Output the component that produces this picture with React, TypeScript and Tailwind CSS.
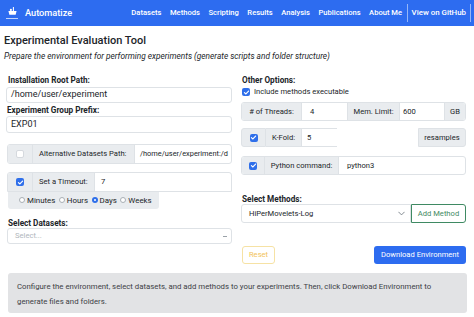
import React from "react";

function Check({ checked }: { checked: boolean }) {
  if (checked) {
    return (
      <span className="w-[8px] h-[8px] rounded-[2px] bg-[#2f6fea] flex items-center justify-center shrink-0">
        <svg viewBox="0 0 8 8" className="w-[7px] h-[7px]">
          <path d="M1.6 4.1 L3.3 5.7 L6.4 2.3" stroke="white" strokeWidth="1.3" fill="none" strokeLinecap="round" strokeLinejoin="round" />
        </svg>
      </span>
    );
  }
  return <span className="w-[8px] h-[8px] rounded-[2px] bg-white border border-[#d5d9de] shrink-0" />;
}

function Radio({ checked, label }: { checked: boolean; label: string }) {
  return (
    <span className="flex items-center gap-[2px]">
      {checked ? (
        <span className="w-[6px] h-[6px] rounded-full bg-[#2f6fea] flex items-center justify-center">
          <span className="w-[2px] h-[2px] rounded-full bg-white" />
        </span>
      ) : (
        <span className="w-[6px] h-[6px] rounded-full bg-white border border-[#a9afb5]" />
      )}
      <span>{label}</span>
    </span>
  );
}

function Chevron() {
  return (
    <svg viewBox="0 0 10 6" className="w-[7px] h-[5px]">
      <path d="M1 1 L5 5 L9 1" stroke="#6c757d" strokeWidth="1.2" fill="none" strokeLinecap="round" />
    </svg>
  );
}

export default function App() {
  const navLinks = ["Datasets", "Methods", "Scripting", "Results", "Analysis", "Publications", "About Me"];
  return (
    <div className="w-[474px] h-[317px] overflow-hidden bg-white text-[#212529] font-['Roboto','Liberation_Sans',Arial,sans-serif]">
      <nav className="h-[26px] bg-[#2d6cf0] flex items-center text-white">
        <div className="flex items-center pl-[6px]">
          <span className="flex flex-col items-center">
            <svg viewBox="0 0 12 10" className="w-[11px] h-[9px]">
              <path d="M7 0.5 L7 4.5" stroke="white" strokeWidth="1.2" strokeLinecap="round" />
              <path d="M1.5 4.5 L10.5 4.5 L9.5 8.5 L2.5 8.5 Z" fill="white" />
              <circle cx="4.2" cy="3.2" r="1.2" fill="white" />
            </svg>
            <span className="mt-[2px] w-[12px] h-[1px] bg-white/70" />
          </span>
          <span className="ml-[7px] text-[9.2px] font-medium leading-none">Automatize</span>
        </div>
        <div className="ml-auto flex items-center h-full text-[7.6px] font-medium pr-[3px]">
          {navLinks.map((l) => (
            <span key={l} className="mr-[8.5px]">{l}</span>
          ))}
          <span className="w-px h-[18px] bg-white/50 mr-[4px] -ml-[4px]" />
          <span className="text-[7.9px]">View on GitHub</span>
          <span className="w-px h-[18px] bg-white/50 ml-[4px]" />
        </div>
      </nav>

      <div className="pl-[6px] pr-[7px]">
        <h1 className="mt-[7px] text-[11px] font-medium leading-[16px] -ml-[2px]">Experimental Evaluation Tool</h1>
        <p className="mt-[2px] text-[8.3px] italic leading-[10px] -ml-[2px]">
          Prepare the environment for performing experiments (generate scripts and folder structure)
        </p>

        <div className="mt-[14px] grid grid-cols-[226px_225px] gap-x-[9px] items-start">
          {/* Left column */}
          <div className="flex flex-col">
            <div className="text-[8.2px] font-bold leading-[10px] pl-[2px]">Installation Root Path:</div>
            <div className="mt-[2px] h-[16px] border border-[#dee2e6] rounded-[3px] flex items-center pl-[4px] text-[9px]">
              /home/user/experiment
            </div>
            <div className="mt-[2px] text-[8.2px] font-bold leading-[10px] pl-[1px]">Experiment Group Prefix:</div>
            <div className="mt-[1px] h-[17px] border border-[#dee2e6] rounded-[3px] flex items-center pl-[4px] text-[9px]">
              EXP01
            </div>

            <div className="mt-[11px] ml-[1px] h-[20px] flex border border-[#dee2e6] rounded-[3px] overflow-hidden text-[7.6px]">
              <div className="w-[25px] bg-[#e9ecef] border-r border-[#dee2e6] flex items-center justify-center">
                <Check checked={false} />
              </div>
              <div className="w-[102px] bg-[#e9ecef] border-r border-[#dee2e6] flex items-center pl-[6px] whitespace-nowrap">
                Alternative Datasets Path:
              </div>
              <div className="flex-1 flex items-center pl-[5px] whitespace-nowrap overflow-hidden text-[7.4px]">/home/user/experiment:/d</div>
            </div>

            <div className="mt-[8px] ml-[1px] h-[20px] flex border border-[#dee2e6] rounded-t-[3px] overflow-hidden text-[7.6px]">
              <div className="w-[25px] bg-[#e9ecef] border-r border-[#dee2e6] flex items-center justify-center">
                <Check checked={true} />
              </div>
              <div className="w-[62px] bg-[#e9ecef] border-r border-[#dee2e6] flex items-center pl-[6px] whitespace-nowrap">
                Set a Timeout:
              </div>
              <div className="flex-1 flex items-center pl-[6px]">7</div>
            </div>
            <div className="ml-[2px] w-[151px] h-[17px] bg-[#e9ecef] rounded-b-[3px] flex items-center pl-[11px] gap-[3.5px] text-[7.9px]">
              <Radio checked={false} label="Minutes" />
              <Radio checked={false} label="Hours" />
              <Radio checked={true} label="Days" />
              <Radio checked={false} label="Weeks" />
            </div>

            <div className="mt-[9px] text-[8.2px] font-bold leading-[10px] pl-[2px]">Select Datasets:</div>
            <div className="mt-[0px] ml-[1px] h-[16px] border border-[#dee2e6] rounded-[3px] flex items-center pl-[7px] pr-[4px] text-[7.6px] text-[#b0b6bc]">
              <span>Select...</span>
              <span className="ml-auto w-[4px] h-[1px] bg-[#9aa1a8]" />
            </div>
          </div>

          {/* Right column */}
          <div className="flex flex-col">
            <div className="text-[8.2px] font-bold leading-[10px] pl-[1px]">Other Options:</div>
            <div className="mt-[2px] h-[10px] flex items-center gap-[4px] text-[7.6px] pl-[1px]">
              <Check checked={true} />
              <span>Include methods executable</span>
            </div>

            <div className="mt-[5px] h-[19px] flex border border-[#dee2e6] rounded-[3px] overflow-hidden text-[7.6px]">
              <div className="w-[60px] bg-[#e9ecef] border-r border-[#dee2e6] flex items-center justify-center whitespace-nowrap">
                # of Threads:
              </div>
              <div className="w-[45px] flex items-center pl-[8px]">4</div>
              <div className="w-[53px] bg-[#e9ecef] border-x border-[#dee2e6] flex items-center justify-center whitespace-nowrap">
                Mem. Limit:
              </div>
              <div className="w-[44px] flex items-center pl-[3px]">600</div>
              <div className="flex-1 bg-[#e9ecef] border-l border-[#dee2e6] flex items-center justify-center">GB</div>
            </div>

            <div className="mt-[7px] h-[19px] flex text-[7.6px]">
              <div className="w-[25px] bg-[#e9ecef] border border-[#dee2e6] rounded-l-[3px] flex items-center justify-center">
                <Check checked={true} />
              </div>
              <div className="w-[36px] bg-[#e9ecef] border-y border-r border-[#dee2e6] flex items-center justify-center">
                K-Fold:
              </div>
              <div className="w-[35px] border-y border-[#dee2e6] flex items-center pl-[5px]">5</div>
              <div className="flex-1" />
              <div className="w-[48px] bg-[#e9ecef] border border-[#dee2e6] rounded-r-[3px] flex items-center justify-center">
                resamples
              </div>
            </div>

            <div className="mt-[9px] h-[19px] flex border border-[#dee2e6] rounded-[3px] overflow-hidden text-[7.6px]">
              <div className="w-[23px] bg-[#e9ecef] border-r border-[#dee2e6] flex items-center justify-center">
                <Check checked={true} />
              </div>
              <div className="w-[74px] bg-[#e9ecef] border-r border-[#dee2e6] flex items-center justify-center whitespace-nowrap">
                Python command:
              </div>
              <div className="flex-1 flex items-center pl-[8px]">python3</div>
            </div>

            <div className="mt-[19px] text-[8.2px] font-bold leading-[10px] pl-[1px]">Select Methods:</div>
            <div className="h-[19px] flex text-[7.6px]">
              <div className="w-[170px] border border-[#dee2e6] rounded-l-[3px] flex items-center pl-[7px] pr-[5px]">
                <span>HiPerMovelets-Log</span>
                <span className="ml-auto flex"><Chevron /></span>
              </div>
              <div className="flex-1 border border-[#3f8a63] rounded-r-[3px] flex items-center justify-center text-[#3f8a63]">
                Add Method
              </div>
            </div>

            <div className="mt-[23px] flex justify-between items-center">
              <div className="ml-[1px] w-[33px] h-[18px] border border-[#f6e2a4] rounded-[3px] flex items-center justify-center text-[7.6px] text-[#f2c35a]">
                Reset
              </div>
              <div className="w-[92px] h-[18px] bg-[#2d6cf0] rounded-[3px] flex items-center justify-center text-[7.6px] text-white">
                Download Environment
              </div>
            </div>
          </div>
        </div>

        <div className="mt-[9px] ml-[2px] h-[40px] bg-[#e2e3e5] rounded-[3px] pl-[9px] pt-[6px] text-[7.8px] leading-[15px] text-[#3d4146]">
          <div className="whitespace-nowrap">
            Configure the environment, select datasets, and add methods to your experiments. Then, click Download Environment to
          </div>
          <div className="whitespace-nowrap">generate files and folders.</div>
        </div>
      </div>
    </div>
  );
}
